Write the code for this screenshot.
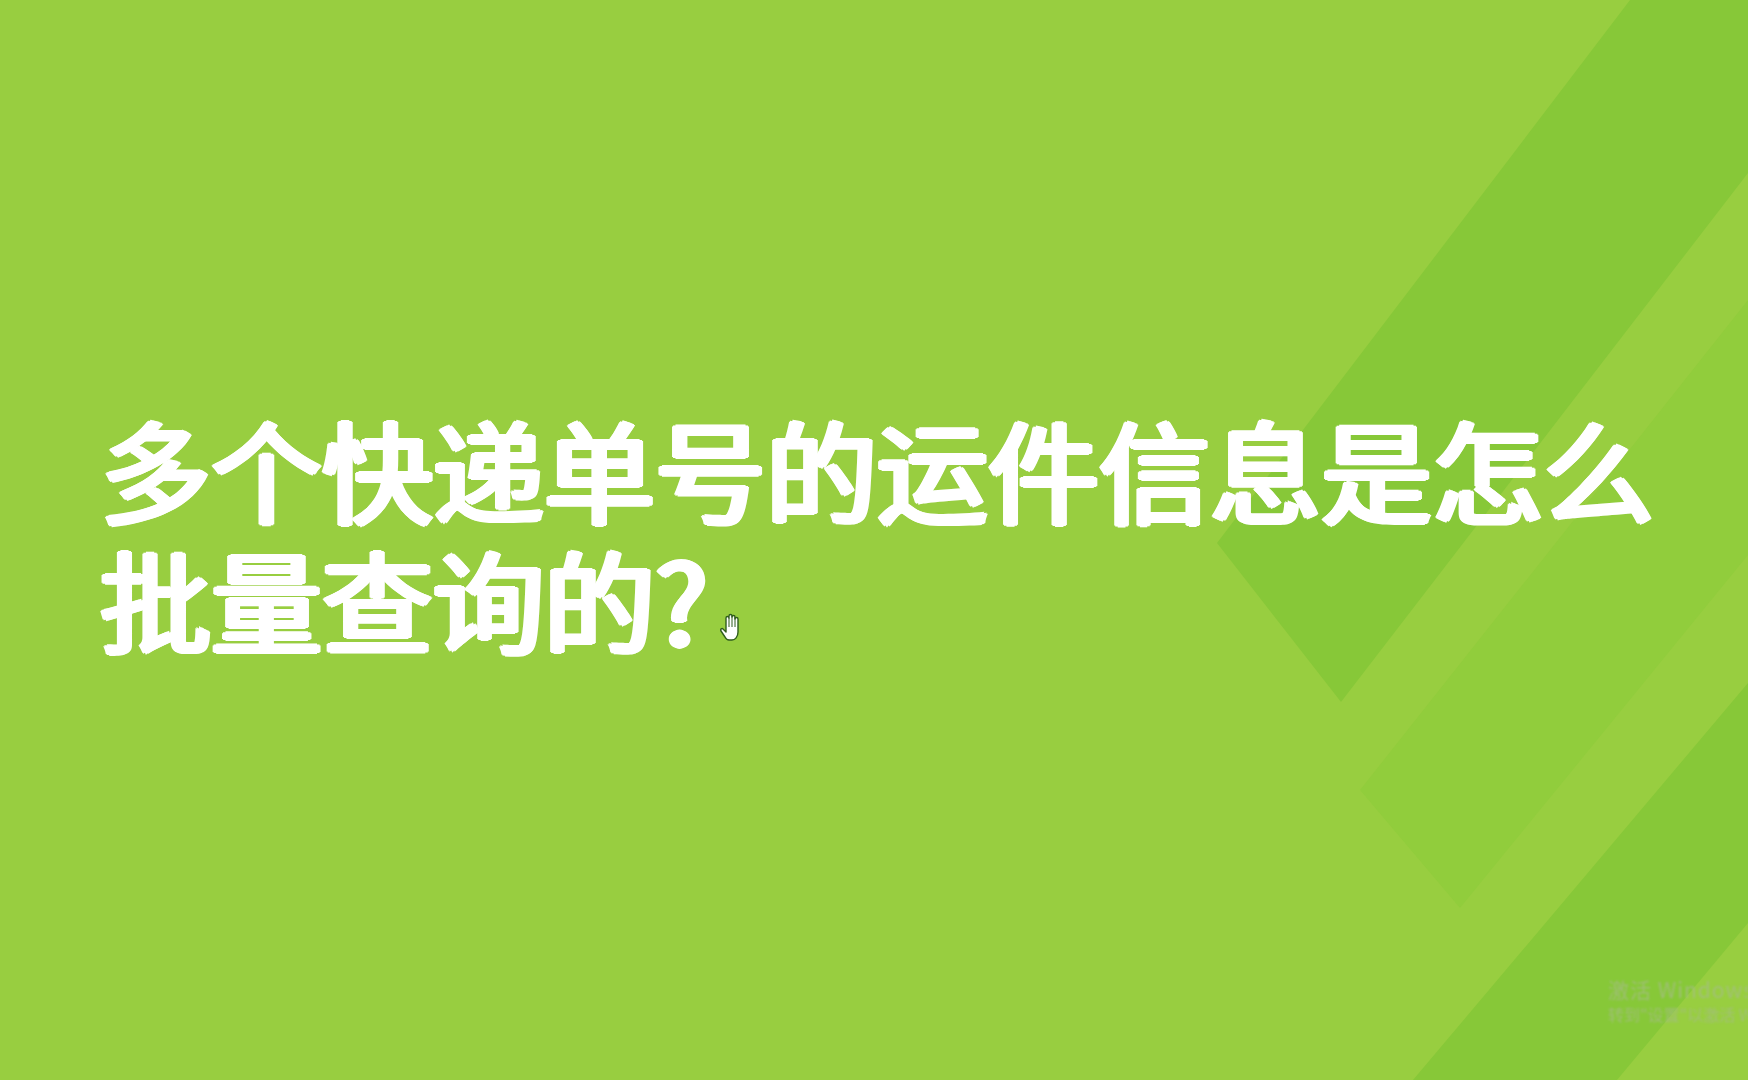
const cjk = { fontFamily: '"Noto Sans CJK SC", "Noto Sans", sans-serif' }

function HandCursor() {
  return (
    <svg width="22" height="30" viewBox="0 0 22 30" className="absolute left-[720px] top-[612px]">
      <path
        d="M9 28c-2 0-3-1-4-3l-4-6c-1-2 1-3 2-2l3 3V6c0-2 3-2 3 0V4c0-2 3-2 3 0v1c0-2 3-2 3 0v2c0-2 3-2 3 0v13c0 5-3 8-6 8z"
        fill="#fff"
        stroke="#2f5d1c"
        strokeWidth="1.4"
        strokeLinejoin="round"
      />
      <path d="M9 6v9M12 4v11M15 5v10" stroke="#2f5d1c" strokeWidth="1" />
    </svg>
  )
}

export default function App() {
  return (
    <div className="relative h-[1080px] w-full overflow-hidden bg-[#98ce40]" style={cjk}>
      {/* background stripes */}
      <svg viewBox="0 0 1748 1080" className="absolute inset-0 h-full w-full">
        <polygon points="1630,0 1748,0 1748,173 1341,702 1217,543" fill="#87c838" />
        <polygon points="1360,790 1748,300 1748,555 1460,908" fill="#91cd3c" />
        <polygon points="1413,1080 1748,683 1748,923 1617,1080" fill="#87c838" />
      </svg>

      <div className="relative w-full pl-[100px] pt-[403px]">
        <h1 className="w-[1580px] text-[111px] font-normal leading-[130px] text-white blur-[0.7px] [text-shadow:3.5px_0_0_#fff,-3.5px_0_0_#fff,0_1.8px_0_#fff,0_-1.8px_0_#fff,2.5px_1.3px_0_#fff,-2.5px_1.3px_0_#fff,2.5px_-1.3px_0_#fff,-2.5px_-1.3px_0_#fff,1.5px_0_0_#fff,-1.5px_0_0_#fff]">
          多个快递单号的运件信息是怎么批量查询的?
        </h1>
      </div>

      <HandCursor />

      <div className="absolute left-[1608px] right-0 top-[976px] overflow-hidden whitespace-nowrap text-[#a4bd84] opacity-80 blur-[1px]">
        <div className="text-[21px] leading-[27px] tracking-[1px]">激活 Windows</div>
        <div className="text-[16px] leading-[23px]">转到"设置"以激活 Windows。</div>
      </div>
    </div>
  )
}
